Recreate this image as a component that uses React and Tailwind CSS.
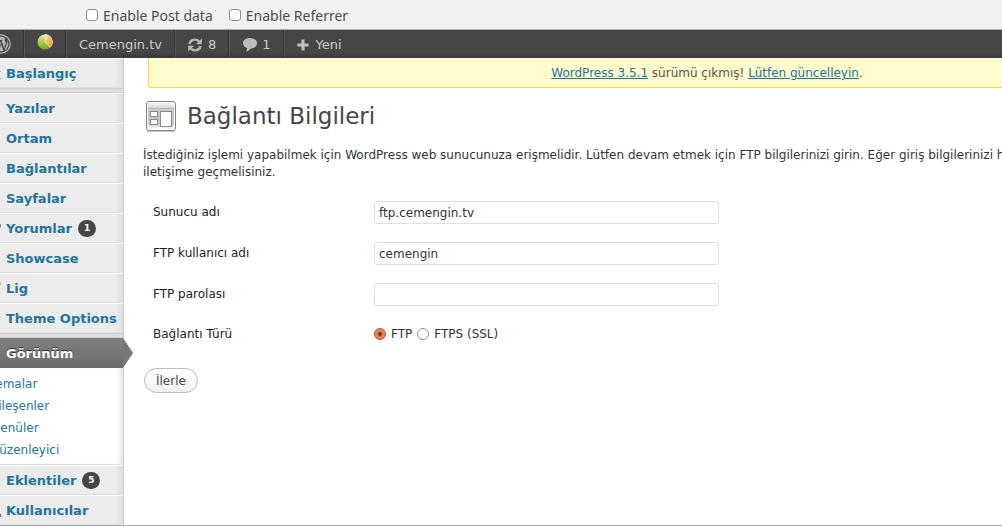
import React from "react";

function BarItem({ className = "", children, label }) {
  return (
    <li className={"flex h-7 items-center border-l border-[#555] " + className}>
      <a href="#" aria-label={label} className="flex h-7 w-full items-center border-r border-[#333]">
        {children}
      </a>
    </li>
  );
}

function WordPressLogo() {
  return (
    <svg width="20" height="20" viewBox="0 0 20 20" className="-ml-[9px] shrink-0" aria-hidden="true">
      <circle cx="10" cy="10" r="9.200" fill="none" stroke="#b5b5b5" strokeWidth="1.3" />
      <path
        fill="#b5b5b5"
        d="M2.8 10c0 2.9 1.7 5.3 4.1 6.5L3.4 7.1C3 8 2.8 9 2.8 10zm12.1-.4c0-.9-.3-1.5-.6-2-.4-.6-.8-1.2-.8-1.8 0-.7.6-1.4 1.3-1.4A7.2 7.2 0 0 0 4 6l2.500-.1c.4 0 .4.600 0 .6l-.8.1 2.600 7.700L9.900 9.600 8.800 6.600 8 6.500c-.4 0-.3-.6 0-.6h3.300c.4 0 .4.600 0 .6l-.8.1 2.600 7.600.7-2.400c.5-1.200 1.100-1.600 1.100-2.200zm-4.800 1L8 16.900c1.500.4 3 .4 4.400-.1l-2.300-6.200zm6.200-4c.2 1.200-.1 2.400-.6 3.600l-2.200 6.200A7.200 7.200 0 0 0 16.300 6.600z"
      />
    </svg>
  );
}

function PieLogo() {
  return (
    <svg width="16" height="16" viewBox="0 0 16 16" aria-hidden="true">
      <defs>
        <linearGradient id="pieGreen" x1="0" y1="0" x2="0" y2="1">
          <stop offset="0" stopColor="#e3edb8" />
          <stop offset="0.5" stopColor="#a8cf40" />
          <stop offset="1" stopColor="#71a51b" />
        </linearGradient>
        <linearGradient id="pieOrange" x1="0" y1="0" x2="1" y2="1">
          <stop offset="0" stopColor="#ffe6b8" />
          <stop offset="1" stopColor="#f28a16" />
        </linearGradient>
      </defs>
      <circle cx="8" cy="8" r="7.500" fill="url(#pieGreen)" />
      <path d="M8 8V.5a7.500 7.500 0 0 1 5.300 12.800z" fill="url(#pieOrange)" stroke="#fff2c0" strokeWidth=".6" />
    </svg>
  );
}

function RefreshIcon() {
  return (
    <svg width="16" height="14" viewBox="0 0 16 14" fill="none" aria-hidden="true">
      <path d="M2.500 6A5.500 5 0 0 1 12 3.300M13.500 8A5.500 5 0 0 1 4 10.700" stroke="#b8b8b8" strokeWidth="2.400" />
      <path d="M14.800 0.500V6.200H9zM1.200 13.500V7.800H7z" fill="#b8b8b8" />
    </svg>
  );
}

function CommentIcon() {
  return (
    <svg width="16" height="15" viewBox="0 0 16 15" aria-hidden="true">
      <path d="M8 1c4 0 7 2.100 7 5.200s-2.600 5.200-6 5.300C7.600 13 5.900 14.200 4 14.600c.8-1.100 1.100-2.400 1-3.700C2.600 10 1 8.300 1 6.200 1 3.100 4 1 8 1z" fill="#bcbcbc" />
    </svg>
  );
}

function PlusIcon() {
  return (
    <svg width="12" height="12" viewBox="0 0 12 12" aria-hidden="true">
      <path d="M4.500 0.500h3v4h4v3h-4v4h-3v-4h-4v-3h4z" fill="#c0c0c0" />
    </svg>
  );
}

function ThemesIcon() {
  return (
    <svg width="32" height="32" viewBox="0 0 32 32" className="shrink-0" aria-hidden="true">
      <defs>
        <linearGradient id="frame" x1="0" y1="0" x2="0" y2="1">
          <stop offset="0" stopColor="#f4f4f4" />
          <stop offset="0.25" stopColor="#d0d0d0" />
          <stop offset="0.26" stopColor="#c6c6c6" />
          <stop offset="0.8" stopColor="#c6c6c6" />
          <stop offset="1" stopColor="#fff" />
        </linearGradient>
      </defs>
      <rect x="1.500" y="1.500" width="29" height="29" rx="2.500" fill="#fff" stroke="#808080" />
      <rect x="3" y="3" width="26" height="26" fill="url(#frame)" />
      <path d="M3 8.500h26" stroke="#b4b4b4" />
      <g fill="#fff" stroke="#8c8c8c">
        <rect x="5.500" y="11.500" width="7" height="5" />
        <rect x="5.500" y="19.500" width="7" height="5" />
        <rect x="15.500" y="11.500" width="11" height="15" />
      </g>
      <path d="M2 31.500h28" stroke="#ccc" />
    </svg>
  );
}

const iconEdges = {
  dashboard: <path d="M0 9.500h1M0 16.500h1" stroke="#a8a8a8" />,
  comments: <path d="M0 6.500C1.200 7.500 1.200 10 0 11z" fill="#666" />,
  league: <path d="M0 4.500C1.200 5.500 1.200 8 0 9z" fill="#d8b060" />,
  users: <path d="M0 14.500C1.200 15 1.500 16 1.500 18H0z" fill="#777" />,
};

function MenuItem({ children, count, icon }) {
  return (
    <li className="border-t border-b border-t-[#f9f9f9] border-b-[#dfdfdf]">
      <a href="#" className="flex h-7 items-center gap-[6px] pt-[2px] text-[13px] leading-5 font-bold whitespace-nowrap text-[#21759b]">
        <svg width="6" height="24" viewBox="0 0 6 24" className="-mr-[6px] shrink-0" aria-hidden="true">
          {iconEdges[icon]}
        </svg>
        {children}
        {count && (
          <span className="mb-px flex h-[17px] w-[18px] items-center justify-center rounded-full bg-[#464646] text-[9px] leading-none text-white">
            {count}
          </span>
        )}
      </a>
    </li>
  );
}

function Separator() {
  return <li role="separator" className="h-[5px] border-t border-b border-[#cfcfcf] bg-[#dfdfdf]" />;
}

function Sidebar() {
  return (
    <nav className="w-[124px] shrink-0 border-r border-[#ccc] bg-[#ececec] shadow-[inset_-6px_0_6px_-4px_#d4d4d4]">
      <ul>
        <MenuItem icon="dashboard">Başlangıç</MenuItem>
        <Separator />
        {["Yazılar", "Ortam", "Bağlantılar", "Sayfalar"].map((name) => (
          <MenuItem key={name}>{name}</MenuItem>
        ))}
        <MenuItem icon="comments" count="1">Yorumlar</MenuItem>
        <MenuItem>Showcase</MenuItem>
        <MenuItem icon="league">Lig</MenuItem>
        <MenuItem>Theme Options</MenuItem>
        <Separator />
        <li>
          <a
            href="#"
            className="relative flex h-[30px] items-center bg-linear-to-b from-[#808080] to-[#6d6d6d] pt-[2px] pl-[6px] text-[13px] font-bold text-white [text-shadow:0_-1px_0_#333]"
          >
            Görünüm
            <svg width="10" height="30" viewBox="0 0 10 30" className="absolute top-0 left-full" aria-hidden="true">
              <path d="M0 0L10 15L0 30z" fill="#777" />
            </svg>
          </a>
          <ul className="overflow-hidden border-b border-[#dfdfdf] bg-white pt-[5px] pb-[3px] shadow-[inset_-6px_0_6px_-4px_#ddd]">
            {["Temalar", "Bileşenler", "Menüler", "Düzenleyici"].map((name) => (
              <li key={name} className="-ml-[10px] h-[22px] text-[12px] leading-[22px]">
                <a href="#" className="text-[#21759b]">{name}</a>
              </li>
            ))}
          </ul>
        </li>
        <MenuItem count="5">Eklentiler</MenuItem>
        <MenuItem icon="users">Kullanıcılar</MenuItem>
      </ul>
    </nav>
  );
}

function Field({ id, label, type = "text", value }) {
  return (
    <div className="flex h-[41px] items-center">
      <label htmlFor={id} className="w-[221px] shrink-0 pb-[2px]">{label}</label>
      <input
        id={id}
        type={type}
        defaultValue={value}
        className="h-[23px] w-[345px] rounded-[3px] border border-[#dfdfdf] bg-white px-1 text-[12px] text-[#333] outline-none"
      />
    </div>
  );
}

function Radio({ label, checked }) {
  return (
    <label className="flex items-center gap-[5px]">
      <input
        type="radio"
        name="connection"
        defaultChecked={checked}
        className="size-3 appearance-none rounded-full border border-[#8f8f8b] bg-white checked:border-[#b8502c] checked:bg-[radial-gradient(circle,#633526_0_1px,#f0825a_3px)]"
      />
      {label}
    </label>
  );
}

function Toggle({ label }) {
  return (
    <label className="flex items-center gap-[5px]">
      <input type="checkbox" className="size-3 appearance-none rounded-[3px] border border-[#8c8b89] bg-white" />
      {label}
    </label>
  );
}

export default function App() {
  return (
    <div className="flex min-h-screen flex-col overflow-hidden border-b border-[#aaa] bg-white font-['DejaVu_Sans',sans-serif] text-[12px] text-[#333]">
      <div className="flex h-[30px] items-center gap-4 border-b border-[#aaa9a7] bg-[#f2f1f0] pt-px pl-[86px] font-['Noto_Sans',sans-serif] text-[14px] text-[#4c4c4c]">
        <Toggle label="Enable Post data" />
        <Toggle label="Enable Referrer" />
      </div>
      <header className="h-7 bg-linear-to-b from-[#464646] from-80% to-[#373737] text-[13px] text-[#ccc]">
        <ul className="flex">
          <li className="flex h-7 w-6 items-center border-r border-[#333]">
            <a href="#" aria-label="WordPress"><WordPressLogo /></a>
          </li>
          <BarItem className="w-[42px]" label="Stats">
            <span className="flex w-full justify-center pb-1"><PieLogo /></span>
          </BarItem>
          <BarItem><span className="px-3 pt-px">Cemengin.tv</span></BarItem>
          <BarItem><span className="flex items-center gap-[5px] pt-px pr-3 pl-[11px]"><RefreshIcon />8</span></BarItem>
          <BarItem><span className="flex items-center gap-1 px-3 pt-px"><CommentIcon />1</span></BarItem>
          <li className="border-l border-[#555]">
            <a href="#" className="flex h-7 items-center gap-[7px] px-3 pt-px"><PlusIcon />Yeni</a>
          </li>
        </ul>
      </header>
      <div className="flex grow">
        <Sidebar />
        <main className="min-w-0 grow overflow-hidden pl-[19px]">
          <div className="-mr-[263px] ml-[5px] h-[30px] rounded-bl-[3px] border-b border-l border-[#e6db55] bg-[#fffbcc] text-center leading-[30px] text-[#555]">
            <a href="#" className="text-[#21759b] underline">WordPress 3.5.1</a> sürümü çıkmış!{" "}
            <a href="#" className="text-[#21759b] underline">Lütfen güncelleyin</a>.
          </div>
          <h1 className="mt-3 flex h-8 items-center gap-[10px] pl-[2px] text-[23px] leading-8 text-[#464646]">
            <ThemesIcon />
            Bağlantı Bilgileri
          </h1>
          <p className="mt-[15px] leading-[17px] whitespace-nowrap">
            İstediğiniz işlemi yapabilmek için WordPress web sunucunuza erişmelidir. Lütfen devam etmek için FTP bilgilerinizi girin. Eğer giriş bilgilerinizi h
            <br />
            iletişime geçmelisiniz.
          </p>
          <form className="mt-[11px] text-[#222]" onSubmit={(e) => e.preventDefault()}>
            <div className="pl-[10px]">
              <Field id="host" label="Sunucu adı" value="ftp.cemengin.tv" />
              <Field id="user" label="FTP kullanıcı adı" value="cemengin" />
              <Field id="pass" label="FTP parolası" type="password" value="" />
              <fieldset className="flex h-[37px] items-center">
                <span className="w-[221px] shrink-0">Bağlantı Türü</span>
                <span className="flex gap-[5px] text-[#333]">
                  <Radio label="FTP" checked />
                  <Radio label="FTPS (SSL)" />
                </span>
              </fieldset>
            </div>
            <button
              type="submit"
              className="mt-4 ml-px h-[25px] rounded-full border border-[#bbb] bg-linear-to-b from-white to-[#f2f2f2] px-[11px] text-[12px] text-[#464646]"
            >
              İlerle
            </button>
          </form>
        </main>
      </div>
    </div>
  );
}
